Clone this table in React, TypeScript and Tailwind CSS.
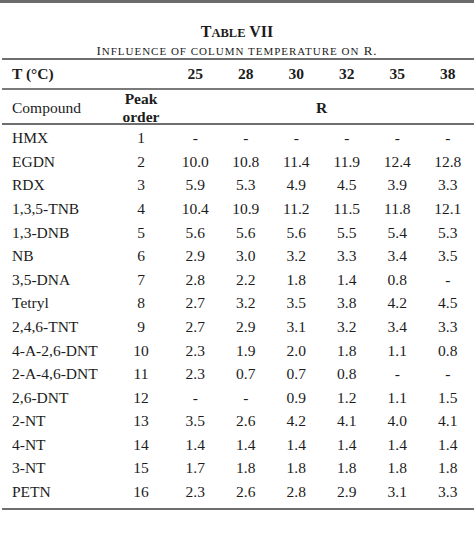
const temps = ["25", "28", "30", "32", "35", "38"];

const rows: [string, string, string[]][] = [
  ["HMX", "1", ["-", "-", "-", "-", "-", "-"]],
  ["EGDN", "2", ["10.0", "10.8", "11.4", "11.9", "12.4", "12.8"]],
  ["RDX", "3", ["5.9", "5.3", "4.9", "4.5", "3.9", "3.3"]],
  ["1,3,5-TNB", "4", ["10.4", "10.9", "11.2", "11.5", "11.8", "12.1"]],
  ["1,3-DNB", "5", ["5.6", "5.6", "5.6", "5.5", "5.4", "5.3"]],
  ["NB", "6", ["2.9", "3.0", "3.2", "3.3", "3.4", "3.5"]],
  ["3,5-DNA", "7", ["2.8", "2.2", "1.8", "1.4", "0.8", "-"]],
  ["Tetryl", "8", ["2.7", "3.2", "3.5", "3.8", "4.2", "4.5"]],
  ["2,4,6-TNT", "9", ["2.7", "2.9", "3.1", "3.2", "3.4", "3.3"]],
  ["4-A-2,6-DNT", "10", ["2.3", "1.9", "2.0", "1.8", "1.1", "0.8"]],
  ["2-A-4,6-DNT", "11", ["2.3", "0.7", "0.7", "0.8", "-", "-"]],
  ["2,6-DNT", "12", ["-", "-", "0.9", "1.2", "1.1", "1.5"]],
  ["2-NT", "13", ["3.5", "2.6", "4.2", "4.1", "4.0", "4.1"]],
  ["4-NT", "14", ["1.4", "1.4", "1.4", "1.4", "1.4", "1.4"]],
  ["3-NT", "15", ["1.7", "1.8", "1.8", "1.8", "1.8", "1.8"]],
  ["PETN", "16", ["2.3", "2.6", "2.8", "2.9", "3.1", "3.3"]],
];

const grid = "grid grid-cols-[100px_58px_repeat(6,50.5px)] pl-[10px]";

export default function App() {
  return (
    <div className="w-[474px] h-[533px] bg-white text-[#1c1c1c] font-[family-name:'Liberation_Serif',serif] overflow-hidden">
      <div className="h-[3px] bg-[#6b6b6b]" />

      <div className="pt-[21px] text-center leading-none">
        <div className="text-[16px] font-bold">
          T<span className="text-[12.5px]">ABLE</span> VII
        </div>
        <div className="mt-[3.5px] text-[13px] tracking-[1px]">
          I<span className="text-[11px]">NFLUENCE OF COLUMN TEMPERATURE ON</span> R.
        </div>
      </div>

      <div className="mt-[1.5px] ml-[2px] border-t-2 border-[#6e6e6e]">
        <div className={`${grid} h-[28px] items-center text-[15.5px] font-bold`}>
          <span>T (°C)</span>
          <span />
          {temps.map((t) => (
            <span key={t} className="text-center">
              {t}
            </span>
          ))}
        </div>

        <div className={`${grid} h-[35px] items-center border-t-2 border-[#7a7a7a] text-[15.5px]`}>
          <span>Compound</span>
          <span className="text-center font-bold leading-[18px]">
            Peak
            <br />
            order
          </span>
          <span className="col-span-6 text-center font-bold">R</span>
        </div>

        <div className="border-t-2 border-b-2 border-[#6e6e6e] pt-[1px] pb-[4.5px] text-[15.5px]">
          {rows.map(([name, order, vals]) => (
            <div key={name} className={`${grid} h-[23.6px] items-center`}>
              <span>{name}</span>
              <span className="text-center">{order}</span>
              {vals.map((v, i) => (
                <span key={i} className="text-center">
                  {v}
                </span>
              ))}
            </div>
          ))}
        </div>
      </div>
    </div>
  );
}
